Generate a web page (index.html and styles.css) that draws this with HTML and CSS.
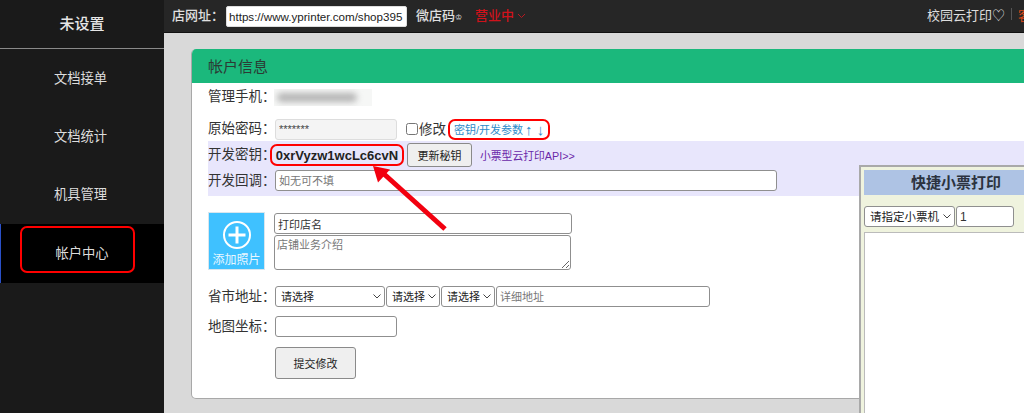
FILE: index.html
```html
<!DOCTYPE html>
<html lang="zh-CN">
<head>
<meta charset="utf-8">
<title>帐户信息</title>
<link rel="stylesheet" href="styles.css">
</head>
<body>
<div class="app">
  <aside class="sidebar">
    <div class="brand">未设置</div>
    <nav class="nav">
      <a class="nav-item">文档接单</a>
      <a class="nav-item">文档统计</a>
      <a class="nav-item">机具管理</a>
      <a class="nav-item active"><span class="nav-active-label">帐户中心</span></a>
    </nav>
  </aside>
  <div class="content">
    <header class="topbar">
      <span class="top-label">店网址：</span>
      <input class="shop-url" type="text" value="https://www.yprinter.com/shop395">
      <span class="qr-label">微店码<span class="qr-mark">♔</span></span>
      <span class="status">营业中<svg class="status-chev" width="9" height="6" viewBox="0 0 9 6"><path d="M1 1l3.500 3.500L8 1" fill="none" stroke="#b81820" stroke-width="1"/></svg></span>
      <span class="top-right">校园云打印♡<span class="sep"></span><span class="service">客服</span></span>
    </header>
    <main class="main">
      <section class="card">
        <h2 class="card-title">帐户信息</h2>
        <div class="card-body">
          <div class="row row-phone">
            <label class="label">管理手机：</label>
            <span class="phone-mask"><span class="phone-blur"></span></span>
          </div>
          <div class="row row-pass">
            <label class="label">原始密码：</label>
            <input class="field field-short field-readonly" type="text" value="*******">
            <input class="check" type="checkbox">
            <span class="check-label">修改</span>
            <a class="param-link boxed">密钥/开发参数<span class="arrows">↑ ↓</span></a>
          </div>
          <div class="dev">
            <div class="row row-key">
              <label class="label">开发密钥：</label>
              <strong class="key boxed">0xrVyzw1wcLc6cvN</strong>
              <button class="btn btn-renew" type="button">更新秘钥</button>
              <a class="api-link">小票型云打印API&gt;&gt;</a>
            </div>
            <div class="row row-callback">
              <label class="label">开发回调：</label>
              <input class="field field-long" type="text" placeholder="如无可不填">
            </div>
          </div>
          <div class="shop">
            <div class="photo">
              <svg width="30" height="30" viewBox="0 0 30 30"><circle cx="15" cy="15" r="13" fill="none" stroke="#fff" stroke-width="2"/><path d="M15 6.500v17M6.500 15h17" stroke="#fff" stroke-width="3"/></svg>
              <span class="photo-text">添加照片</span>
            </div>
            <div class="shop-fields">
              <input class="field field-name" type="text" value="打印店名">
              <textarea class="field field-intro" placeholder="店铺业务介绍"></textarea>
            </div>
          </div>
          <div class="row row-address">
            <label class="label">省市地址：</label>
            <select class="select select-a"><option>请选择</option></select>
            <select class="select select-b"><option>请选择</option></select>
            <select class="select select-b"><option>请选择</option></select>
            <input class="field field-address" type="text" placeholder="详细地址">
          </div>
          <div class="row row-map">
            <label class="label">地图坐标：</label>
            <input class="field field-short" type="text">
          </div>
          <div class="row row-submit">
            <button class="btn btn-submit" type="button">提交修改</button>
          </div>
        </div>
      </section>
    </main>
  </div>
</div>
<aside class="ticket">
  <div class="ticket-title">快捷小票打印</div>
  <div class="ticket-controls">
    <select class="select select-printer"><option>请指定小票机</option></select>
    <input class="field field-count" type="text" value="1">
  </div>
  <textarea class="ticket-text"></textarea>
</aside>
<svg class="arrow" width="90" height="80" viewBox="0 0 90 80"><path d="M75 64L14 9" stroke="#f2000f" stroke-width="5" fill="none"/><path d="M3 1l17 3.500-12 13z" fill="#f2000f"/></svg>
</body>
</html>
```
FILE: styles.css
```css
* { box-sizing: border-box; }
html, body { margin: 0; height: 100%; overflow: hidden; }
body { font-family: "Liberation Sans", "Noto Sans CJK SC", sans-serif; font-size: 14px; color: #333; background: #d9d9d9; }
.app { display: flex; height: 413px; }

.sidebar { width: 164px; flex: none; background: #1a1a1a; color: #ddd; }
.brand { height: 49px; border-bottom: 1px solid #8a8a8a; display: flex; align-items: center; justify-content: center; font-size: 15px; font-weight: 500; color: #e6e6e6; padding-bottom: 4px; }
.nav-item { display: flex; height: 58.400px; align-items: center; justify-content: center; font-size: 13.300px; color: #ddd; padding: 0 3px 2px 0; }
.nav-item.active { background: #000; border-left: 1px solid #2a50c8; padding: 0; }
.nav-active-label { display: flex; width: 115px; height: 47px; margin: -7px 0 0 -11px; align-items: center; justify-content: center; border: 2px solid #f00; border-radius: 7px; padding: 5px 0 0 10px; }

.content { flex: 1; min-width: 0; display: flex; flex-direction: column; overflow: hidden; }
.topbar { height: 33px; flex: none; background: #262626; border-bottom: 1px solid #111; display: flex; align-items: center; padding: 0 0 4px 8px; color: #e0e0e0; font-size: 13px; white-space: nowrap; }
.top-label { font-weight: 500; width: 54px; }
.shop-url { width: 181px; height: 21px; border: 1px solid #ddd; border-radius: 2px; padding: 0 2px; margin: 4px 0 0; font: 11.600px "Liberation Sans", sans-serif; color: #222; background: #fff; }
.qr-label { margin-left: 9px; font-weight: 500; }
.qr-mark { font-size: 8px; }
.status { margin-left: 13px; color: #d0121b; font-weight: 500; display: flex; align-items: center; gap: 3px; }
.status-chev { margin-top: 3px; }
.top-right { margin-left: auto; width: 97px; font-size: 13px; display: flex; align-items: center; overflow: hidden; color: #ddd; flex: none; }
.sep { width: 1px; height: 12px; background: #555; margin: 0 6px 0 6px; flex: none; }
.service { color: #d8481a; flex: none; }

.main { flex: 1; padding: 16px 0 0 27px; overflow: hidden; }
.card { width: 900px; height: 350px; background: #fff; border: 1px solid #a8a8a8; border-top: 0; border-radius: 5px; overflow: hidden; }
.card-title { margin: 0; height: 34px; background: #1bb87c; color: #2c3a34; font-size: 15px; font-weight: 400; line-height: 35px; padding-left: 16px; }
.card-body { padding: 0 0 0 16px; }

.row { display: flex; align-items: center; }
.label { width: 67px; flex: none; font-size: 13.500px; line-height: 16px; color: #333; white-space: nowrap; }
.row-phone { height: 28px; }
.phone-mask { width: 98px; height: 17px; background: #f6f7f6; display: flex; align-items: center; justify-content: center; margin-left: -1px; overflow: hidden; }
.phone-blur { width: 80px; height: 9px; background: #b4b4b4; border-radius: 5px; filter: blur(3px); margin-right: 13px; }
.row-pass { height: 22px; margin-top: 7px; }

.field { border: 1px solid #8f8f8f; border-radius: 3px; background: #fff; font: 11px "Liberation Sans", "Noto Sans CJK SC", sans-serif; color: #333; padding: 0 3px; margin: 0; outline: 0; }
.field::placeholder { color: #777; }
.field-short { width: 122px; height: 21px; }
.field-readonly { background: #f4f4f4; border-color: #ddd; border-width: 1px; color: #444; }
.check { width: 12px; height: 12px; margin: 0 0 0 9px; flex: none; }
.check-label { margin-left: 1px; font-size: 13.500px; padding-bottom: 3px; }
.boxed { border: 2px solid #f00; border-radius: 7px; }
.param-link { margin-left: 2px; height: 21px; width: 102px; display: flex; align-items: center; padding-left: 4px; color: #2e8bc9; font-size: 11px; white-space: nowrap; }
.arrows { font-size: 15px; margin-left: 2px; }

.dev { margin-top: 1px; background: #e8e6fc; height: 55px; padding-top: 2px; }
.row-key { height: 24px; }
.key { width: 134px; height: 22px; margin-left: -5px; display: flex; align-items: center; justify-content: center; font-size: 13px; color: #222; white-space: nowrap; }
.btn { border: 1px solid #8a8a8a; border-radius: 3px; background: #efefef; color: #222; font: 11px "Liberation Sans", "Noto Sans CJK SC", sans-serif; padding: 0; margin: 0; }
.btn-renew { width: 65px; height: 24px; margin-left: 3px; }
.api-link { margin-left: 8px; color: #6a28a8; font-size: 10.800px; white-space: nowrap; }
.row-callback { margin-top: 3px; height: 21px; }
.field-long { width: 502px; height: 21px; }

.shop { display: flex; margin-top: 16px; height: 58px; }
.photo { width: 57px; height: 58px; background: #3fc1ff; border: 1px solid #d8e6ee; display: flex; flex-direction: column; align-items: center; color: #e8f7ff; padding-top: 7px; }
.photo-text { font-size: 12px; line-height: 14px; margin-top: 3px; white-space: nowrap; }
.shop-fields { margin-left: 9px; display: flex; flex-direction: column; gap: 1px; padding-top: 1px; }
.field-name { width: 298px; height: 21px; color: #333; }
.field-intro { width: 297px; height: 35px; padding: 0 2px; display: block; }

.row-address { margin-top: 16px; height: 21px; }
.select { appearance: none; height: 21px; border: 1px solid #8f8f8f; border-radius: 3px; background: #fff url("data:image/svg+xml,%3Csvg xmlns='http://www.w3.org/2000/svg' width='8' height='5'%3E%3Cpath d='M.5.500L4 4 7.500.500' fill='none' stroke='%23444'/%3E%3C/svg%3E") no-repeat right 3px center; font: 11px "Liberation Sans", "Noto Sans CJK SC", sans-serif; color: #222; margin: 0 1px 0 0; padding: 0 0 0 5px; flex: none; }
.select-a { width: 110px; }
.select-b { width: 54px; }
.field-address { width: 214px; height: 21px; }
.row-map { margin-top: 9px; height: 21px; }
.row-submit { margin-top: 10px; padding-left: 67px; }
.btn-submit { width: 81px; height: 32px; }

.ticket { position: absolute; left: 859px; top: 165px; width: 200px; height: 260px; background: #eff3de; border: 2px solid #a9a9a9; border-right: 0; padding: 3px 0 0 3px; }
.ticket-title { height: 25px; background: #aec3e4; color: #2c3340; font-size: 15px; font-weight: 700; line-height: 25px; width: 184px; text-align: center; }
.ticket-controls { display: flex; margin-top: 11px; }
.select-printer { width: 91px; height: 21px; margin-right: 1px; font-size: 11.500px; }
.field-count { width: 58px; height: 21px; font-size: 12px; }
.ticket-text { display: block; margin: 5px 0 0; width: 190px; height: 200px; border: 1px solid #bbb; background: #fff; padding: 0; resize: none; outline: 0; }

.arrow { position: absolute; left: 370px; top: 165px; }
```
